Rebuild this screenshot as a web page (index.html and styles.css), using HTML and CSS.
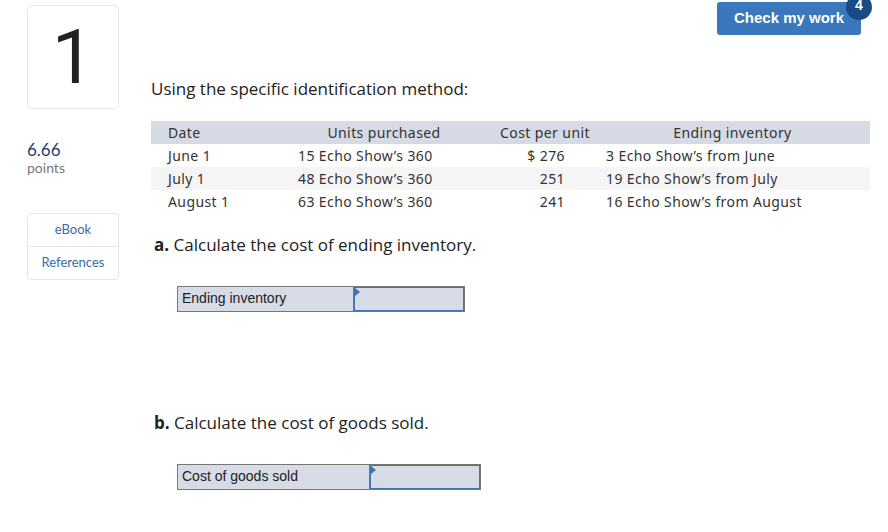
FILE: index.html
```html
<!DOCTYPE html>
<html lang="en">
<head>
    <meta charset="UTF-8">
    <title>Question 1</title>
    <link rel="stylesheet" href="styles.css">
</head>
<body>

<div class="page">
    <div class="sidebar">
        <div class="sidebar__number">1</div>
        <div class="sidebar__points">
            <div class="sidebar__value">6.66</div>
            <div class="sidebar__label">points</div>
        </div>
        <div class="sidebar__links">
            <a class="sidebar__link">eBook</a>
            <a class="sidebar__link">References</a>
        </div>
    </div>

    <div class="question">
        <div class="question__top">
            <button class="check-btn">Check my work<span class="check-btn__badge">4</span></button>
        </div>

        <p class="question__intro">Using the specific identification method:</p>

        <table class="data">
            <colgroup>
                <col class="data__col-date">
                <col class="data__col-units">
                <col class="data__col-cost">
                <col>
            </colgroup>
            <thead>
                <tr>
                    <th class="data__date">Date</th>
                    <th class="data__units">Units purchased</th>
                    <th class="data__cost">Cost per unit</th>
                    <th class="data__ending">Ending inventory</th>
                </tr>
            </thead>
            <tbody>
                <tr>
                    <td class="data__date">June 1</td>
                    <td class="data__units">15 Echo Show’s 360</td>
                    <td class="data__cost">$ 276</td>
                    <td class="data__ending">3 Echo Show’s from June</td>
                </tr>
                <tr class="data__row--alt">
                    <td class="data__date">July 1</td>
                    <td class="data__units">48 Echo Show’s 360</td>
                    <td class="data__cost">251</td>
                    <td class="data__ending">19 Echo Show’s from July</td>
                </tr>
                <tr>
                    <td class="data__date">August 1</td>
                    <td class="data__units">63 Echo Show’s 360</td>
                    <td class="data__cost">241</td>
                    <td class="data__ending">16 Echo Show’s from August</td>
                </tr>
            </tbody>
        </table>

        <p class="question__part"><b>a.</b> Calculate the cost of ending inventory.</p>
        <div class="answer">
            <div class="answer__label">Ending inventory</div>
            <div class="answer__input"></div>
        </div>

        <p class="question__part question__part--b"><b>b.</b> Calculate the cost of goods sold.</p>
        <div class="answer answer--wide">
            <div class="answer__label">Cost of goods sold</div>
            <div class="answer__input"></div>
        </div>
    </div>
</div>

</body>
</html>
```

FILE: styles.css
```css
body {
    margin: 0;
    background: #fff;
    color: #222;
    font-family: "Open Sans", "Liberation Sans", sans-serif;
}
.page {
    display: flex;
    padding-left: 27px;
}
.sidebar {
    width: 92px;
    flex-shrink: 0;
    padding-top: 5px;
}
.sidebar__number {
    height: 102px;
    border: 1px solid #e6e6e6;
    border-radius: 5px;
    display: flex;
    align-items: center;
    justify-content: center;
    font-family: "Roboto", sans-serif;
    font-size: 76px;
    line-height: 1;
    color: #222;
}
.sidebar__points {
    margin-top: 31px;
    height: 73px;
}
.sidebar__value {
    font-family: "Lato", sans-serif;
    font-size: 17px;
    color: #24406e;
    line-height: 20px;
}
.sidebar__label {
    font-family: "Lato", sans-serif;
    font-size: 14px;
    color: #777;
    line-height: 16px;
}
.sidebar__links {
    border: 1px solid #e6e6e6;
    border-radius: 4px;
    display: flex;
    flex-direction: column;
}
.sidebar__link {
    height: 32px;
    line-height: 31px;
    text-align: center;
    font-family: "Lato", sans-serif;
    font-size: 13px;
    color: #3c6aa6;
}
.sidebar__link + .sidebar__link {
    border-top: 1px solid #e6e6e6;
}
.question {
    flex: 1;
    margin-left: 32px;
    margin-right: 17px;
    padding-top: 2px;
}
.question__top {
    display: flex;
    justify-content: flex-end;
    padding-right: 10px;
}
.check-btn {
    position: relative;
    height: 33px;
    padding: 0 17px 2px;
    border: none;
    border-radius: 3px;
    background: #3a77bc;
    color: #fff;
    font-family: "Liberation Sans", Arial, sans-serif;
    font-weight: bold;
    font-size: 15px;
}
.check-btn__badge {
    position: absolute;
    top: -8px;
    right: -11px;
    width: 26px;
    height: 26px;
    border-radius: 50%;
    background: #1a4a85;
    color: #fff;
    font-size: 14px;
    line-height: 22px;
    text-align: center;
}
.question__intro {
    margin: 43px 0 0;
    font-size: 17px;
    line-height: 21px;
}
.data {
    margin-top: 22px;
    width: 719px;
    table-layout: fixed;
    border-collapse: collapse;
    font-family: "Noto Sans", sans-serif;
    font-size: 14px;
    letter-spacing: 0.4px;
    color: #333;
}
.data__col-date {
    width: 138px;
}
.data__col-units {
    width: 190px;
}
.data__col-cost {
    width: 116px;
}
.data th,
.data td {
    height: 23px;
    padding: 0;
    font-weight: normal;
    white-space: nowrap;
}
.data thead tr {
    background: #d6dae4;
}
.data__row--alt {
    background: #f5f5f5;
}
.data .data__date {
    padding-left: 17px;
    text-align: left;
}
.data td.data__units {
    padding-left: 9px;
    text-align: left;
}
.data th.data__units {
    text-align: center;
}
.data td.data__cost {
    padding-right: 30px;
    text-align: right;
}
.data th.data__cost {
    padding-left: 16px;
    text-align: center;
}
.data td.data__ending {
    padding-left: 11px;
    text-align: left;
}
.data th.data__ending {
    text-align: center;
}
.question__part {
    margin: 22px 0 0 3px;
    font-size: 17px;
    line-height: 20px;
}
.question__part--b {
    margin-top: 101px;
}
.answer {
    display: flex;
    margin: 31px 0 0 26px;
    width: 288px;
    height: 26px;
    border: 1px solid #777;
    box-sizing: border-box;
    background: #d7dbe5;
}
.answer--wide {
    width: 304px;
    margin-top: 31px;
}
.answer__label {
    flex: 1;
    padding-left: 4px;
    border-right: 1px solid #777;
    font-family: "Liberation Sans", Arial, sans-serif;
    font-size: 14px;
    line-height: 23px;
    color: #222;
}
.answer__input {
    position: relative;
    width: 110px;
    border: 1px solid #3e73b5;
    box-sizing: border-box;
}
.answer__input::before {
    content: "";
    position: absolute;
    top: 0;
    left: 0;
    border-top: 4px solid transparent;
    border-bottom: 4px solid transparent;
    border-left: 5px solid #3e73b5;
}
```
